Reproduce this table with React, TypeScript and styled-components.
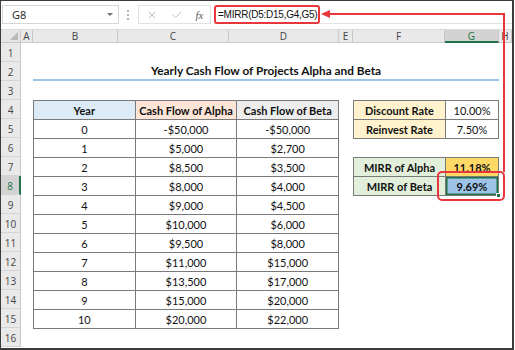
import React from 'react';
import styled, { createGlobalStyle } from 'styled-components';
import { X, Check } from 'lucide-react';

const GlobalStyle = createGlobalStyle`
    html, body {
        margin: 0;
        padding: 0;
        background: #ffffff;
    }
    * { box-sizing: border-box; }
`;

// ---------- frame + formula bar ----------

const Frame = styled.div`
    position: relative;
    width: 514px;
    height: 350px;
    border: 1px solid #3c3c3c;
    border-width: 1px 2px 2px 1px;
    background: #ffffff;
    overflow: hidden;
    font-family: 'Lato', 'Liberation Sans', sans-serif;
`;

const FormulaBar = styled.div`
    height: 29px;
    display: flex;
    align-items: flex-start;
    padding-top: 4px;
    background: #ffffff;
    border-bottom: 1px solid #dadada;
    font-family: 'Open Sans', 'Liberation Sans', sans-serif;
`;

const NameBox = styled.div`
    width: 117px;
    height: 19px;
    margin-left: 1px;
    border: 1px solid #d6d6d6;
    display: flex;
    align-items: center;
    justify-content: space-between;
    padding: 0 5px 0 9px;
    font-size: 11px;
    color: #222;
`;

const Caret = styled.span`
    width: 0;
    height: 0;
    border-left: 3px solid transparent;
    border-right: 3px solid transparent;
    border-top: 3px solid #6f6f6f;
`;

const Dots = styled.div`
    width: 18px;
    height: 19px;
    display: flex;
    flex-direction: column;
    align-items: center;
    justify-content: center;
    gap: 2px;

    span {
        width: 2px;
        height: 2px;
        background: #b5b5b5;
    }
`;

const ButtonBox = styled.div`
    width: 73px;
    height: 19px;
    margin-left: 1px;
    border: 1px solid #e2e2e2;
    display: flex;
    align-items: center;
    justify-content: space-around;
    color: #a9a9a9;
    font-size: 11px;
`;

const Fx = styled.span`
    font-family: 'Liberation Serif', serif;
    font-style: italic;
    color: #5a5a5a;
    font-size: 11px;
`;

const FormulaField = styled.div`
    flex: 1;
    height: 19px;
    margin-left: 3px;
    display: flex;
    align-items: center;
    border-bottom: 1px solid #e2e2e2;
`;

const FormulaText = styled.div`
    height: 19px;
    width: 106px;
    border: 2px solid #e8363d;
    border-radius: 3px;
    display: flex;
    align-items: center;
    padding-left: 2px;
    font-family: 'Liberation Sans', sans-serif;
    font-size: 10px;
    letter-spacing: -0.25px;
    color: #111;
    white-space: nowrap;
`;

// ---------- sheet grid ----------

const Sheet = styled.div`
    display: grid;
    grid-template-columns: 20px 12px 85px 111px 110px 14px 92px 54px 1fr;
    grid-template-rows: 13px repeat(16, 19px);
    background: #ffffff;
`;

const Corner = styled.div`
    position: relative;
    background: #e6e6e6;
    border-right: 1px solid #c8c8c8;
    border-bottom: 1px solid #c8c8c8;

    &::after {
        content: '';
        position: absolute;
        right: 2px;
        bottom: 2px;
        border-left: 8px solid transparent;
        border-bottom: 8px solid #b9b9b9;
    }
`;

const ColHead = styled.div<{ $active?: boolean }>`
    background: ${p => (p.$active ? '#d3d3d3' : '#e9e9e9')};
    border-right: 1px solid #c8c8c8;
    border-bottom: ${p => (p.$active ? '2px solid #217346' : '1px solid #c8c8c8')};
    color: ${p => (p.$active ? '#217346' : '#444')};
    font-family: 'Open Sans', 'Liberation Sans', sans-serif;
    font-size: 10px;
    line-height: 12px;
    text-align: center;
`;

const RowHead = styled.div<{ $row: number; $active?: boolean }>`
    grid-row: ${p => p.$row + 1};
    grid-column: 1;
    background: ${p => (p.$active ? '#d3d3d3' : '#e9e9e9')};
    border-right: ${p => (p.$active ? '2px solid #217346' : '1px solid #c8c8c8')};
    border-bottom: 1px solid #d4d4d4;
    color: ${p => (p.$active ? '#217346' : '#444')};
    font-family: 'Open Sans', 'Liberation Sans', sans-serif;
    font-size: 10px;
    display: flex;
    align-items: flex-end;
    justify-content: center;
    padding-bottom: 1px;
`;

const Title = styled.div`
    grid-row: 3;
    grid-column: 3 / 9;
    border-bottom: 2px solid #9dc3e6;
    display: flex;
    align-items: center;
    justify-content: center;
    font-weight: 700;
    font-size: 11.8px;
    color: #111;
`;

const Block = styled.div<{ $row: string; $col: string }>`
    grid-row: ${p => p.$row};
    grid-column: ${p => p.$col};
`;

const Table = styled.table`
    width: 100%;
    height: 100%;
    border-collapse: collapse;
    table-layout: fixed;
    font-size: 11px;
    color: #111;
`;

const Cell = styled.td<{ $bg?: string; $bold?: boolean; $selected?: boolean }>`
    position: relative;
    height: 19px;
    padding: 0;
    border: 1px solid #7a7a7a;
    background: ${p => p.$bg || '#ffffff'};
    font-weight: ${p => (p.$bold ? 700 : 400)};
    text-align: center;
    vertical-align: middle;
    box-shadow: ${p => (p.$selected ? 'inset 0 0 0 1.5px #217346' : 'none')};
`;

const Handle = styled.span`
    position: absolute;
    right: -3px;
    bottom: -3px;
    width: 5px;
    height: 5px;
    background: #217346;
    border: 1px solid #ffffff;
`;

const Overlay = styled.svg`
    position: absolute;
    left: 0;
    top: 0;
    pointer-events: none;
`;

// ---------- data ----------

const COLS = ['A', 'B', 'C', 'D', 'E', 'F', 'G', 'H'];

const CASH_FLOWS: { year: number; alpha: string; beta: string }[] = [
    { year: 0, alpha: '-$50,000', beta: '-$50,000' },
    { year: 1, alpha: '$5,000', beta: '$2,700' },
    { year: 2, alpha: '$8,500', beta: '$3,500' },
    { year: 3, alpha: '$8,000', beta: '$4,000' },
    { year: 4, alpha: '$9,000', beta: '$4,500' },
    { year: 5, alpha: '$10,000', beta: '$6,000' },
    { year: 6, alpha: '$9,500', beta: '$8,000' },
    { year: 7, alpha: '$11,000', beta: '$15,000' },
    { year: 8, alpha: '$13,500', beta: '$17,000' },
    { year: 9, alpha: '$15,000', beta: '$20,000' },
    { year: 10, alpha: '$20,000', beta: '$22,000' },
];

const App: React.FC = () => {
    return (
        <>
            <GlobalStyle />
            <Frame>
                <FormulaBar>
                    <NameBox>
                        G8
                        <Caret />
                    </NameBox>
                    <Dots>
                        <span />
                        <span />
                        <span />
                    </Dots>
                    <ButtonBox>
                        <X size={12} strokeWidth={1.5} />
                        <Check size={12} strokeWidth={1.5} />
                        <Fx>fx</Fx>
                    </ButtonBox>
                    <FormulaField>
                        <FormulaText>=MIRR(D5:D15,G4,G5)</FormulaText>
                    </FormulaField>
                </FormulaBar>

                <Sheet>
                    <Corner />
                    {COLS.map(c => (
                        <ColHead key={c} $active={c === 'G'}>{c}</ColHead>
                    ))}

                    {Array.from({ length: 16 }, (_, i) => (
                        <RowHead key={i} $row={i + 1} $active={i + 1 === 8}>
                            {i + 1}
                        </RowHead>
                    ))}

                    <Title>Yearly Cash Flow of Projects Alpha and Beta</Title>

                    <Block $row="5 / 17" $col="3 / 6">
                        <Table>
                            <tbody>
                                <tr>
                                    <Cell $bg="#ddebf7" $bold>Year</Cell>
                                    <Cell $bg="#fce4d6" $bold>Cash Flow of Alpha</Cell>
                                    <Cell $bg="#ededed" $bold>Cash Flow of Beta</Cell>
                                </tr>
                                {CASH_FLOWS.map(row => (
                                    <tr key={row.year}>
                                        <Cell>{row.year}</Cell>
                                        <Cell>{row.alpha}</Cell>
                                        <Cell>{row.beta}</Cell>
                                    </tr>
                                ))}
                            </tbody>
                        </Table>
                    </Block>

                    <Block $row="5 / 7" $col="7 / 9">
                        <Table>
                            <colgroup>
                                <col style={{ width: 92 }} />
                                <col />
                            </colgroup>
                            <tbody>
                                <tr>
                                    <Cell $bg="#fff2cc" $bold>Discount Rate</Cell>
                                    <Cell>10.00%</Cell>
                                </tr>
                                <tr>
                                    <Cell $bg="#fff2cc" $bold>Reinvest Rate</Cell>
                                    <Cell>7.50%</Cell>
                                </tr>
                            </tbody>
                        </Table>
                    </Block>

                    <Block $row="8 / 10" $col="7 / 9">
                        <Table>
                            <colgroup>
                                <col style={{ width: 92 }} />
                                <col />
                            </colgroup>
                            <tbody>
                                <tr>
                                    <Cell $bg="#e2efda" $bold>MIRR of Alpha</Cell>
                                    <Cell $bg="#ffd966" $bold>11.18%</Cell>
                                </tr>
                                <tr>
                                    <Cell $bg="#e2efda" $bold>MIRR of Beta</Cell>
                                    <Cell $bg="#9dc3e6" $bold $selected>
                                        9.69%
                                        <Handle />
                                    </Cell>
                                </tr>
                            </tbody>
                        </Table>
                    </Block>
                </Sheet>

                <Overlay width={514} height={350}>
                    <path
                        d="M328 13 H503 V171"
                        fill="none"
                        stroke="#e8363d"
                        strokeWidth={2}
                    />
                    <path d="M320 13 L329 9 L329 17 Z" fill="#e8363d" />
                    <rect
                        x={437}
                        y={171}
                        width={66}
                        height={28}
                        rx={4}
                        fill="none"
                        stroke="#e8363d"
                        strokeWidth={2}
                    />
                </Overlay>
            </Frame>
        </>
    );
};

export default App;
